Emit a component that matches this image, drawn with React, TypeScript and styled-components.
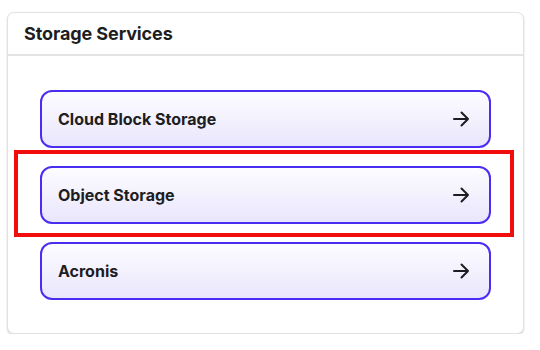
import React from "react";
import styled, { createGlobalStyle, css } from "styled-components";

const GlobalStyle = createGlobalStyle`
  html, body {
    margin: 0;
    padding: 0;
    background: #ffffff;
    font-family: Inter, "Noto Sans", "Liberation Sans", sans-serif;
    color: #1d1d22;
  }
`;

const Page = styled.div`
  padding: 12px 0 0 7px;
`;

const Card = styled.section`
  width: 517px;
  box-sizing: border-box;
  border: 1px solid #e2e2e2;
  border-radius: 7px;
  background: #ffffff;
  box-shadow: 0 1px 2px rgba(0, 0, 0, 0.18);
`;

const CardHeader = styled.header`
  height: 41px;
  display: flex;
  align-items: center;
  padding: 0 16px;
  border-bottom: 2px solid #e3e3e3;
  h2 {
    margin: 0;
    font-size: 18px;
    font-weight: 700;
    letter-spacing: -0.1px;
  }
`;

const CardBody = styled.div`
  display: flex;
  flex-direction: column;
  gap: 18px;
  padding: 34px 32px 33px;
`;

const ServiceButton = styled.button<{ $highlighted?: boolean }>`
  position: relative;
  height: 58px;
  box-sizing: border-box;
  display: flex;
  align-items: center;
  justify-content: space-between;
  padding: 0 19px 0 16px;
  border: 2px solid #4a2df2;
  border-radius: 12px;
  background: linear-gradient(180deg, #fdfcff 0%, #e9e6fc 100%);
  font-family: inherit;
  font-size: 16px;
  font-weight: 700;
  color: #1d1d22;
  cursor: pointer;
  text-align: left;

  ${(p) =>
    p.$highlighted &&
    css`
      &::after {
        content: "";
        position: absolute;
        left: -28px;
        right: -25px;
        top: -18px;
        bottom: -15px;
        border: 4px solid #f20d0d;
        pointer-events: none;
      }
    `}
`;

const Arrow = () => (
  <svg width="18" height="18" viewBox="0 0 18 18" fill="none">
    <path
      d="M2 9h14M9.5 2.5 16 9l-6.5 6.5"
      stroke="#1d1d22"
      strokeWidth="2"
      strokeLinecap="round"
      strokeLinejoin="round"
    />
  </svg>
);

const services = [
  { name: "Cloud Block Storage" },
  { name: "Object Storage", highlighted: true },
  { name: "Acronis" },
];

const App = () => {
  return (
    <>
      <GlobalStyle />
      <Page>
        <Card>
          <CardHeader>
            <h2>Storage Services</h2>
          </CardHeader>
          <CardBody>
            {services.map((s) => (
              <ServiceButton key={s.name} $highlighted={s.highlighted}>
                <span>{s.name}</span>
                <Arrow />
              </ServiceButton>
            ))}
          </CardBody>
        </Card>
      </Page>
    </>
  );
};

export default App;
